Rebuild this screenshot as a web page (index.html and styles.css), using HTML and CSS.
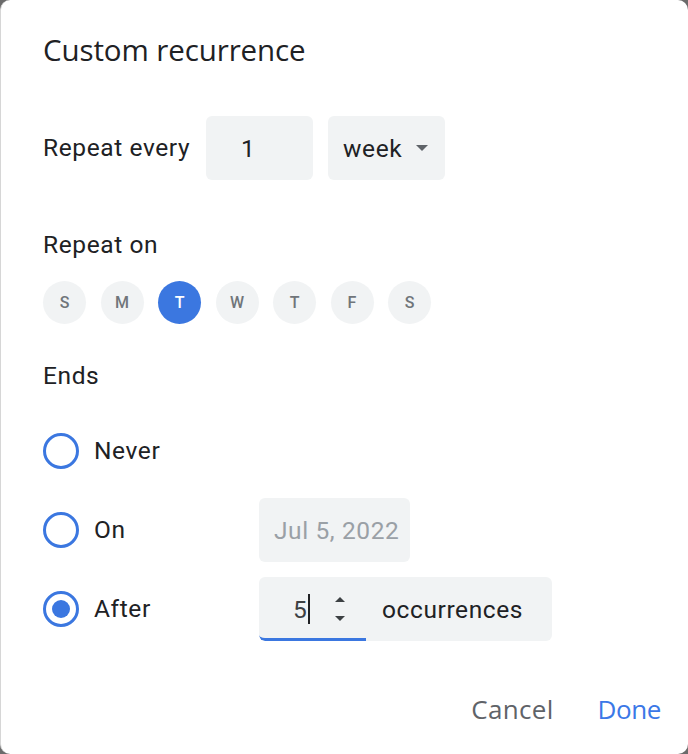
FILE: index.html
```html
<!DOCTYPE html>
<html>
<head>
<meta charset="utf-8">
<link rel="stylesheet" href="styles.css">
</head>
<body>
<div class="dialog">
  <div class="title">Custom recurrence</div>

  <div class="repeat-row">
    <span class="label">Repeat every</span>
    <div class="field num-field">1</div>
    <div class="field select-field">
      <span>week</span>
      <svg class="caret" width="12" height="6" viewBox="0 0 12 6"><path d="M0 0 L12 0 L6 6 Z" fill="#5f6368"/></svg>
    </div>
  </div>

  <div class="label section-label">Repeat on</div>
  <div class="days">
    <div class="day">S</div>
    <div class="day">M</div>
    <div class="day day-on">T</div>
    <div class="day">W</div>
    <div class="day">T</div>
    <div class="day">F</div>
    <div class="day">S</div>
  </div>

  <div class="label ends-label">Ends</div>
  <div class="ends">
    <div class="end-row">
      <span class="radio"></span>
      <span class="label end-label">Never</span>
    </div>
    <div class="end-row">
      <span class="radio"></span>
      <span class="label end-label">On</span>
      <div class="field date-field">Jul 5, 2022</div>
    </div>
    <div class="end-row">
      <span class="radio radio-on"><span class="dot"></span></span>
      <span class="label end-label">After</span>
      <div class="field occ-field">
        <div class="occ-num">
          <span class="occ-value">5</span><span class="cursor"></span>
          <span class="spinner">
            <svg width="12" height="30" viewBox="0 0 12 30"><path d="M1 8 L11 8 L6 3 Z" fill="#3c4043"/><path d="M1 22 L11 22 L6 27 Z" fill="#3c4043"/></svg>
          </span>
        </div>
        <span class="occ-text">occurrences</span>
      </div>
    </div>
  </div>

  <div class="footer">
    <span class="btn btn-cancel">Cancel</span>
    <span class="btn btn-done">Done</span>
  </div>
</div>
</body>
</html>
```
FILE: styles.css
```css
html, body {
  margin: 0;
  padding: 0;
  background: #6b6b6b;
}
body {
  width: 688px;
  height: 754px;
  overflow: hidden;
}
.dialog {
  width: 688px;
  height: 754px;
  box-sizing: border-box;
  background: #fff;
  border-radius: 10px;
  border-left: 1px solid #d6d6d6;
  padding: 32px 0 0 42px;
  font-family: Roboto, "Liberation Sans", sans-serif;
  color: #202124;
}
.title {
  font-family: "Open Sans", Roboto, sans-serif;
  font-size: 29.5px;
  line-height: 36px;
  font-weight: 500;
  color: #202124;
  letter-spacing: -0.1px;
}
.label {
  font-size: 24.5px;
  letter-spacing: 0.6px;
  line-height: 32px;
  color: #202124;
}
.repeat-row {
  display: flex;
  align-items: center;
  margin-top: 48px;
  height: 64px;
}
.repeat-row .label {
  margin-right: 16px;
}
.field {
  background: #f1f3f4;
  border-radius: 6px;
  height: 64px;
  box-sizing: border-box;
  display: flex;
  align-items: center;
  font-size: 24.5px;
  letter-spacing: 0.6px;
  color: #202124;
  flex: none;
}
.num-field {
  width: 107px;
  padding-left: 35px;
}
.select-field {
  margin-left: 15px;
  width: 117px;
  padding-left: 15px;
}
.caret {
  margin-left: 14px;
}
.section-label {
  margin-top: 49px;
}
.days {
  display: flex;
  gap: 14.5px;
  margin-top: 20px;
}
.day {
  width: 43px;
  height: 43px;
  border-radius: 50%;
  background: #f1f3f4;
  color: #70757a;
  font-size: 16px;
  font-weight: 500;
  display: flex;
  align-items: center;
  justify-content: center;
}
.day-on {
  background: #3b77e0;
  color: #fff;
}
.ends-label {
  margin-top: 36px;
}
.ends {
  margin-top: 27px;
  display: flex;
  flex-direction: column;
  gap: 15px;
}
.end-row {
  display: flex;
  align-items: center;
  height: 64px;
}
.radio {
  width: 36px;
  height: 36px;
  box-sizing: border-box;
  border: 3px solid #3b77e0;
  border-radius: 50%;
  display: flex;
  align-items: center;
  justify-content: center;
  flex: none;
}
.dot {
  width: 18px;
  height: 18px;
  border-radius: 50%;
  background: #3b77e0;
}
.end-label {
  width: 180px;
  padding-left: 15px;
  box-sizing: border-box;
  flex: none;
}
.date-field {
  width: 151px;
  padding-left: 15px;
  color: #9aa0a6;
}
.occ-field {
  width: 293px;
  overflow: hidden;
}
.occ-num {
  width: 107px;
  height: 64px;
  box-sizing: border-box;
  border-bottom: 3px solid #3b77e0;
  border-radius: 0 0 0 6px;
  display: flex;
  align-items: center;
  padding-left: 34px;
  padding-top: 3px;
  flex: none;
}
.occ-value {
  color: #3c4043;
}
.cursor {
  width: 2px;
  height: 30px;
  background: #202124;
  margin-left: 1px;
}
.spinner {
  margin-left: 24px;
  display: flex;
  align-items: center;
}
.occ-text {
  margin-left: 16px;
}
.footer {
  margin-top: 50px;
  display: flex;
  justify-content: flex-end;
  gap: 44px;
  padding-right: 27px;
}
.btn {
  font-family: "Open Sans", Roboto, sans-serif;
  font-size: 26px;
  font-weight: 500;
  line-height: 36px;
}
.btn-cancel {
  color: #5f6368;
  letter-spacing: 0.3px;
}
.btn-done {
  color: #3b78e7;
  letter-spacing: -0.4px;
}
```
